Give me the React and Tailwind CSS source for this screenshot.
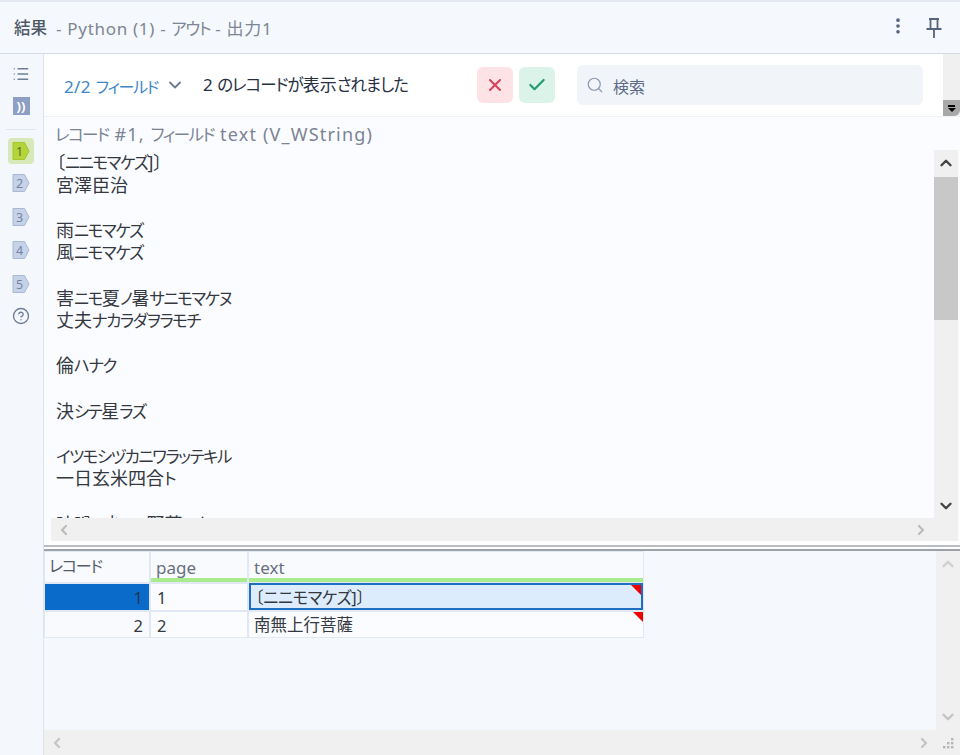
import React from 'react';
import { List, MoreVertical, ChevronDown, ChevronUp, ChevronLeft, ChevronRight, X, Check, Search, CircleHelp } from 'lucide-react';

const poem = `〔ニニモマケズ]〕
宮澤臣治

雨ニモマケズ
風ニモマケズ

害ニモ夏ノ暑サニモマケヌ
丈夫ナカラダヲラモチ

倫ハナク

決シテ星ラズ

イツモシヅカニワラッテキル
一日玄米四合ト

味噌ト少シノ野菜ヲタベ`;

// kana sits narrower than kanji in the original font
const Jp = ({ text, kana = 'text-[16.5px] tracking-[-1.5px] leading-none' }) =>
  text.split(/([\u3040-\u30FF]+)/).map((part, i) =>
    i % 2 ? <span key={i} className={kana}>{part}</span> : part
  );

const TagIcon = ({ n, active }) => (
  <svg width="20" height="20" viewBox="0 0 20 20" className="block">
    <path
      d="M2 1.5h11.5l4.5 8.5-4.5 8.5H2z"
      fill={active ? '#b4d53a' : '#c6d2e8'}
      stroke={active ? '#a6c52e' : '#a9b8d6'}
      strokeWidth="1"
    />
    <text x="8.5" y="14.5" fontSize="12.5" textAnchor="middle" fill={active ? '#55701a' : '#7485a6'}>{n}</text>
  </svg>
);

const Sidebar = () => (
  <div className="w-[44px] shrink-0 border-r border-[#dde4ef] bg-[#f4f8fd] flex flex-col items-center pt-[11px]">
    <List className="w-[18px] h-[18px] text-[#6f7d97] mr-[2px]" strokeWidth={1.7} />
    <div className="mt-[14px] w-[17px] h-[18px] bg-[#8d9fc4] mr-[1px] flex items-center justify-center text-white text-[13px] font-bold leading-none">
      ))
    </div>
    <div className="mt-[14px] w-[30px] h-px bg-[#dfe5ef] mr-[2px]" />
    <div className="mt-[8px] w-[26px] h-[26px] rounded-[4px] bg-[#d8e9b9] flex items-center justify-center mr-[1px]">
      <TagIcon n="1" active />
    </div>
    <div className="mt-[9px] flex flex-col items-center gap-[13.5px] mr-[1px]">
      <TagIcon n="2" />
      <TagIcon n="3" />
      <TagIcon n="4" />
      <TagIcon n="5" />
    </div>
    <CircleHelp className="mt-[13px] w-[18px] h-[18px] text-[#6f7d97] mr-[1px]" strokeWidth={1.8} />
  </div>
);

const Toolbar = () => (
  <div className="h-[63px] shrink-0 flex bg-white border-b border-[#eff2f7]">
    <div className="flex-1 flex items-center">
      <div className="w-[433px] shrink-0 flex items-center">
        <span className="ml-[20px] w-[95px] shrink-0 mt-[3px] text-[17px] tracking-[0.4px] text-[#3d86c6] whitespace-nowrap">
          <Jp text="2/2 フィールド" kana="text-[16px] tracking-[-1.3px] leading-none" />
        </span>
        <ChevronDown className="ml-[6px] w-[20px] h-[20px] text-[#6c7a92]" strokeWidth={2.2} />
        <span className="ml-[18px] text-[17px] text-[#27303f] whitespace-nowrap">
          <Jp text="2 のレコードが表示されました" kana="text-[16.5px] tracking-[-1px] leading-none" />
        </span>
      </div>
      <button className="w-[36px] h-[36px] rounded-[6px] bg-[#fde2e6] flex items-center justify-center">
        <X className="w-[20px] h-[20px] text-[#d9405a]" strokeWidth={2.4} />
      </button>
      <button className="ml-[6px] w-[36px] h-[36px] rounded-[6px] bg-[#dcf3ea] flex items-center justify-center">
        <Check className="w-[20px] h-[20px] text-[#1f9c70]" strokeWidth={2.6} />
      </button>
      <div className="ml-[22px] w-[346px] h-[40px] -mt-[1px] rounded-[6px] bg-[#f1f4f9] flex items-center">
        <Search className="ml-[9px] w-[18px] h-[18px] text-[#8c99b3]" strokeWidth={1.6} />
        <span className="ml-[9px] mt-[5px] text-[16px] text-[#5c6b88]">検索</span>
      </div>
    </div>
    <div className="w-[17px] bg-[#f0f0f0] flex flex-col justify-end">
      <div className="h-[16px] bg-[#a8a8a8] rounded-br-[6px] flex flex-col items-center justify-center gap-px">
        <div className="w-[7px] h-[2px] bg-black" />
        <div className="w-0 h-0 border-x-[4px] border-x-transparent border-t-[4px] border-t-black" />
      </div>
    </div>
  </div>
);

const RecordView = () => (
  <div className="flex-1 min-h-0 flex bg-[#fbfcff]">
    <div className="flex-1 min-w-0 flex flex-col">
      <div className="h-[33px] shrink-0 pl-[11px] pt-[4px] text-[18px] tracking-[1.2px] text-[#7b8494] leading-[26px] whitespace-nowrap">
        <Jp text="レコード #1, フィールド text (V_WString)" />
      </div>
      <div className="flex-1 min-h-0 overflow-hidden pl-[12px] pt-[1px] whitespace-pre-line text-[18px] leading-[22.6px] text-[#343840]">
        <Jp text={poem} />
      </div>
      <div className="h-[23px] shrink-0 ml-[7px] bg-[#f0f0f0] flex items-center justify-between px-[5px]">
        <ChevronLeft className="w-[16px] h-[16px] text-[#bcbcbc]" strokeWidth={3.4} />
        <ChevronRight className="w-[16px] h-[16px] text-[#bcbcbc]" strokeWidth={3.4} />
      </div>
    </div>
    <div className="w-[26px] shrink-0 flex flex-col">
      <div className="h-[33px] shrink-0" />
      <div className="flex-1 bg-[#f0f0f0] w-[24px] flex flex-col items-center">
        <ChevronUp className="mt-[4px] mb-[5px] w-[18px] h-[18px] text-[#444]" strokeWidth={3.2} />
        <div className="w-full h-[143px] bg-[#c8c8c8]" />
        <div className="flex-1" />
        <ChevronDown className="mb-[3px] w-[18px] h-[18px] text-[#444]" strokeWidth={3.2} />
      </div>
      <div className="h-[23px] shrink-0 bg-[#f0f0f0] w-[24px]" />
    </div>
  </div>
);

const Triangle = () => (
  <div className="absolute top-0 right-0 w-0 h-0 border-l-[10px] border-l-transparent border-t-[10px] border-t-[#f00000]" />
);

const Table = () => (
  <div className="grid grid-cols-[104px_96px_394px] gap-x-[2px] gap-y-[2px] w-fit px-px py-px bg-[#e1e8f3] text-[16.5px] text-[#343840] leading-none">
    <div className="h-[30px] bg-[#f8fafe] pl-[4px] pt-[6px] text-[#555d6b]">
      <Jp text="レコード" kana="text-[16px] tracking-[-1.2px] leading-none" />
    </div>
    <div className="h-[30px] bg-[#f8fafe] border-b-[4px] border-b-[#a8ec8e] pl-[5px] pt-[7px] text-[17px] text-[#68707e]">page</div>
    <div className="h-[30px] bg-[#f8fafe] border-b-[4px] border-b-[#a8ec8e] pl-[5px] pt-[7px] text-[17px] text-[#68707e]">text</div>

    <div className="h-[26px] bg-[#0b6bcb] text-right pr-[6px] pt-[6px] text-[#23364f]">1</div>
    <div className="h-[26px] bg-[#fbfcff] pl-[6px] pt-[6px]">1</div>
    <div className="relative h-[27px] -mt-px bg-[#dcecfd] border-2 border-[#1f6fc0] pl-[4px] pt-[5px]">
      <Jp text="〔ニニモマケズ]〕" kana="text-[16.5px] tracking-[-0.6px] leading-none" />
      <Triangle />
    </div>

    <div className="h-[25px] bg-[#f8fafe] text-right pr-[6px] pt-[6px]">2</div>
    <div className="h-[25px] bg-[#fbfcff] pl-[6px] pt-[6px]">2</div>
    <div className="relative h-[25px] bg-[#fbfcff] pl-[5px] pt-[5px]">
      南無上行菩薩
      <Triangle />
    </div>
  </div>
);

const App = () => (
  <div className="w-[960px] h-[755px] overflow-hidden flex flex-col bg-[#f5f8fd] font-['Noto_Sans','Noto_Sans_CJK_JP',sans-serif] [font-feature-settings:'palt']">
    <div className="h-[2px] shrink-0 bg-[#e3e8f1]" />
    <div className="h-[52px] shrink-0 flex items-center border-b border-[#d5dbe6] pl-[14px] pr-[17px] text-[#7d8694]">
      <span className="mt-[2px] font-medium text-[16.5px] text-[#4f5867]">結果</span>
      <span className="mt-[2px] ml-[9px] text-[17px] tracking-[0.7px] whitespace-nowrap">
        <Jp text="- Python (1) - アウト - 出力1" kana="text-[16.5px] tracking-[-1.4px] leading-none" />
      </span>
      <MoreVertical className="ml-auto -mt-[4px] w-[20px] h-[20px] text-[#56647d]" strokeWidth={2.4} />
      {/* pin */}
      <svg width="18" height="22" viewBox="0 0 18 22" className="ml-[17px] text-[#56647d]" fill="none" stroke="currentColor" strokeWidth="1.8">
        <path d="M4 2h10M5.500 2v10M12.500 2v10M1.500 12h15M9 12v9" />
      </svg>
    </div>
    <div className="flex-1 min-h-0 flex">
      <Sidebar />
      <div className="flex-1 min-w-0 flex flex-col">
        <Toolbar />
        <RecordView />
        {/* splitter */}
        <div className="h-[10px] shrink-0 bg-white flex flex-col">
          <div className="mt-[4px] h-[2px] bg-[#b9bcc2]" />
          <div className="mt-[2px] h-[2px] bg-[#9da1a8]" />
        </div>
        <div className="h-[204px] shrink-0 flex flex-col">
          <div className="flex-1 min-h-0 flex">
            <div className="flex-1 bg-[#f5f8fd]">
              <Table />
            </div>
            <div className="w-[24px] bg-[#f0f0f0] flex flex-col items-center justify-between py-[4px]">
              <ChevronUp className="w-[18px] h-[18px] text-[#cfcfcf]" strokeWidth={3.2} />
              <ChevronDown className="w-[18px] h-[18px] text-[#c4c4c4]" strokeWidth={3.2} />
            </div>
          </div>
          <div className="h-[25px] shrink-0 bg-[#f0f0f0] flex items-center pl-[5px] pr-[5px]">
            <ChevronLeft className="w-[16px] h-[16px] text-[#c4c4c4]" strokeWidth={3.4} />
            <ChevronRight className="ml-auto w-[16px] h-[16px] text-[#c4c4c4]" strokeWidth={3.4} />
            <svg width="14" height="14" viewBox="0 0 14 14" className="ml-[9px]">
              <g fill="#b5b5b5">
                <rect x="10" y="2" width="2.4" height="2.4" />
                <rect x="6" y="6" width="2.4" height="2.4" />
                <rect x="10" y="6" width="2.4" height="2.4" />
                <rect x="2" y="10" width="2.4" height="2.4" />
                <rect x="6" y="10" width="2.4" height="2.4" />
                <rect x="10" y="10" width="2.4" height="2.4" />
              </g>
            </svg>
          </div>
        </div>
      </div>
    </div>
  </div>
);

export default App;
